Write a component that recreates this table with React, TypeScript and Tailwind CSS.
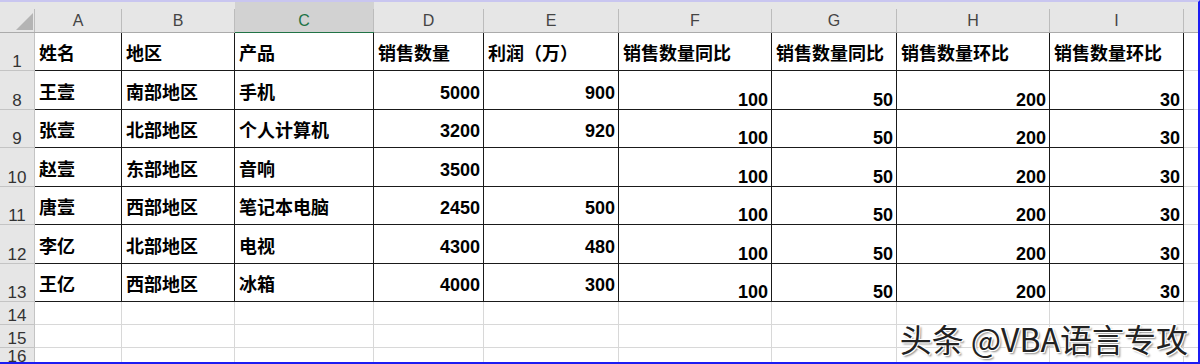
import React from "react";

const colLetters = ["A", "B", "C", "D", "E", "F", "G", "H", "I"];

type Row = { num: string; cells: string[]; header?: boolean };

const rows: Row[] = [
  {
    num: "1",
    header: true,
    cells: ["姓名", "地区", "产品", "销售数量", "利润（万）", "销售数量同比", "销售数量同比", "销售数量环比", "销售数量环比"],
  },
  { num: "8", cells: ["王壹", "南部地区", "手机", "5000", "900", "100", "50", "200", "30"] },
  { num: "9", cells: ["张壹", "北部地区", "个人计算机", "3200", "920", "100", "50", "200", "30"] },
  { num: "10", cells: ["赵壹", "东部地区", "音响", "3500", "", "100", "50", "200", "30"] },
  { num: "11", cells: ["唐壹", "西部地区", "笔记本电脑", "2450", "500", "100", "50", "200", "30"] },
  { num: "12", cells: ["李亿", "北部地区", "电视", "4300", "480", "100", "50", "200", "30"] },
  { num: "13", cells: ["王亿", "西部地区", "冰箱", "4000", "300", "100", "50", "200", "30"] },
];

const font = { fontFamily: '"Liberation Sans", "Noto Sans CJK SC", sans-serif' };

function ColHeader({ label, selected }: { label: string; selected?: boolean }) {
  return (
    <div
      className={
        selected
          ? "flex bg-[#d2d2d2] border-b border-[#217346]"
          : "flex bg-[#e6e6e6] border-b border-[#ababab]"
      }
    >
      <div
        className={
          selected
            ? "flex-1 flex items-center justify-center pt-[8px] text-[16px] leading-none text-[#217346]"
            : "flex-1 flex items-center justify-center pt-[8px] text-[16px] leading-none text-[#444]"
        }
      >
        {label}
      </div>
      <div className="w-px self-end h-[23px] bg-[#bcbcbc]" />
    </div>
  );
}

function RowHeader({ n }: { n: string }) {
  return (
    <div className="flex items-end justify-center bg-[#e6e6e6] border-r border-b border-[#c4c4c4] text-[17px] leading-none text-[#333]">
      {n}
    </div>
  );
}

export default function App() {
  return (
    <div
      className="w-[1200px] h-[364px] overflow-hidden relative bg-white border-t-2 border-t-[#c9c6f0] border-r-2 border-r-[#1c1cf2] border-b-2 border-b-[#1c1cf2]"
      style={font}
    >
      <div className="grid h-full grid-cols-[35px_87px_113px_139px_110px_135px_153px_125px_153px_134px_1fr] grid-rows-[31px_38px_39px_38px_39px_38px_39px_38px_23px_23px_1fr]">
        {/* corner */}
        <div className="flex bg-[#e6e6e6] border-b border-[#ababab]">
          <div className="flex-1 flex items-end justify-end pb-[2px] pr-[1px]">
            <svg width="17" height="17" viewBox="0 0 17 17">
              <polygon points="17,0 17,17 0,17" fill="#b4b4b4" />
            </svg>
          </div>
          <div className="w-px self-end h-[23px] bg-[#bcbcbc]" />
        </div>
        {colLetters.map((l) => (
          <ColHeader key={l} label={l} selected={l === "C"} />
        ))}
        <div className="bg-[#e6e6e6] border-b border-[#ababab]" />

        {rows.map((r) => (
          <React.Fragment key={r.num}>
            <RowHeader n={r.num} />
            {r.cells.map((c, i) => {
              if (r.header || i < 3) {
                return (
                  <div
                    key={i}
                    className="flex items-center pt-[6px] pl-[4px] border-r border-b border-[#1a1a1a] text-[18px] font-bold text-black whitespace-nowrap overflow-hidden"
                  >
                    {c}
                  </div>
                );
              }
              if (i < 5) {
                return (
                  <div
                    key={i}
                    className="flex items-center justify-end pt-[6px] pr-[3px] border-r border-b border-[#1a1a1a] text-[18px] font-bold text-black"
                  >
                    {c}
                  </div>
                );
              }
              return (
                <div
                  key={i}
                  className="flex items-end justify-end pr-[3px] border-r border-b border-[#1a1a1a] text-[18px] leading-none font-bold text-black"
                >
                  {c}
                </div>
              );
            })}
            <div className="border-b border-[#d8d8d8]" />
          </React.Fragment>
        ))}

        {["14", "15", "16"].map((n) => (
          <React.Fragment key={n}>
            <RowHeader n={n} />
            {colLetters.map((l) => (
              <div key={l} className="border-r border-b border-[#d8d8d8]" />
            ))}
            <div className="border-b border-[#d8d8d8]" />
          </React.Fragment>
        ))}
      </div>

      <div
        className="absolute right-[10px] bottom-[8px] text-[32px] leading-none text-[#222] whitespace-nowrap [text-shadow:1px_1px_0_#fff,-1px_-1px_0_#fff,1px_-1px_0_#fff,-1px_1px_0_#fff,2px_2px_2px_#888]"
        style={{ fontFamily: '"Noto Sans CJK SC", "Liberation Sans", sans-serif' }}
      >
        头条 @VBA语言专攻
      </div>
    </div>
  );
}
